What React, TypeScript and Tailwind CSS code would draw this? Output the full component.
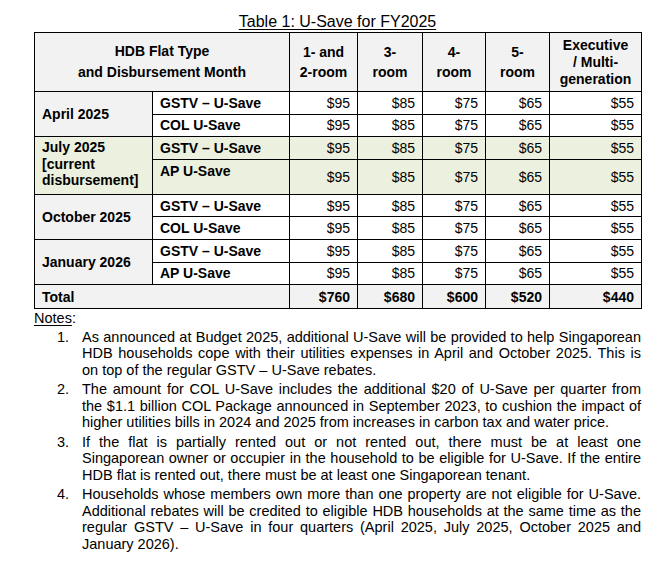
import React from 'react'

const font = { fontFamily: '"Liberation Sans", Arial, sans-serif' }

type Row = {
  type: string
  values: string[]
}

type Group = {
  month: React.ReactNode
  green?: boolean
  rows: Row[]
}

const vals = ['$95', '$85', '$75', '$65', '$55']

const groups: Group[] = [
  {
    month: 'April 2025',
    rows: [
      { type: 'GSTV – U-Save', values: vals },
      { type: 'COL U-Save', values: vals },
    ],
  },
  {
    month: (
      <>
        July 2025
        <br />
        [current
        <br />
        disbursement]
      </>
    ),
    green: true,
    rows: [
      { type: 'GSTV – U-Save', values: vals },
      { type: 'AP U-Save', values: vals },
    ],
  },
  {
    month: 'October 2025',
    rows: [
      { type: 'GSTV – U-Save', values: vals },
      { type: 'COL U-Save', values: vals },
    ],
  },
  {
    month: 'January 2026',
    rows: [
      { type: 'GSTV – U-Save', values: vals },
      { type: 'AP U-Save', values: vals },
    ],
  },
]

const notes: string[][] = [
  [
    'As announced at Budget 2025, additional U-Save will be provided to help Singaporean',
    'HDB households cope with their utilities expenses in April and October 2025. This is',
    'on top of the regular GSTV – U-Save rebates.',
  ],
  [
    'The amount for COL U-Save includes the additional $20 of U-Save per quarter from',
    'the $1.1 billion COL Package announced in September 2023, to cushion the impact of',
    'higher utilities bills in 2024 and 2025 from increases in carbon tax and water price.',
  ],
  [
    'If the flat is partially rented out or not rented out, there must be at least one',
    'Singaporean owner or occupier in the household to be eligible for U-Save. If the entire',
    'HDB flat is rented out, there must be at least one Singaporean tenant.',
  ],
  [
    'Households whose members own more than one property are not eligible for U-Save.',
    'Additional rebates will be credited to eligible HDB households at the same time as the',
    'regular GSTV – U-Save in four quarters (April 2025, July 2025, October 2025 and',
    'January 2026).',
  ],
]

const cell = 'border border-black px-[7px]'

export default function App() {
  return (
    <div className="min-h-screen bg-white pl-[34px] pt-[11px] text-black" style={font}>
      <div className="w-[607px]">
        <div className="text-center text-[16px] leading-[21px]">
          <span className="underline underline-offset-2">Table 1: U-Save for FY2025</span>
        </div>

        <table className="w-[607px] table-fixed border-collapse text-[14px]">
          <colgroup>
            <col className="w-[118px]" />
            <col className="w-[137px]" />
            <col className="w-[68px]" />
            <col className="w-[65px]" />
            <col className="w-[63px]" />
            <col className="w-[64px]" />
            <col className="w-[92px]" />
          </colgroup>
          <thead>
            <tr className="h-[59px] bg-[#f2f2f2] font-bold">
              <th colSpan={2} className={`${cell} text-center leading-[21px]`}>
                HDB Flat Type
                <br />
                and Disbursement Month
              </th>
              <th className={`${cell} text-center leading-[20px]`}>
                1- and
                <br />
                2-room
              </th>
              <th className={`${cell} text-center leading-[20px]`}>
                3-
                <br />
                room
              </th>
              <th className={`${cell} text-center leading-[20px]`}>
                4-
                <br />
                room
              </th>
              <th className={`${cell} text-center leading-[20px]`}>
                5-
                <br />
                room
              </th>
              <th className={`${cell} text-center leading-[17px]`}>
                Executive
                <br />/ Multi-
                <br />
                generation
              </th>
            </tr>
          </thead>
          <tbody>
            {groups.map((g, gi) =>
              g.rows.map((r, ri) => {
                const tall = g.green && ri === 1
                const bg = g.green ? 'bg-[#ebf1de]' : 'bg-white'
                return (
                  <tr key={`${gi}-${ri}`} className={tall ? 'h-[35px]' : 'h-[22.6px]'}>
                    {ri === 0 && (
                      <td
                        rowSpan={2}
                        className={`${cell} font-bold ${
                          g.green
                            ? 'bg-[#ebf1de] pt-[2px] align-top leading-[16.5px]'
                            : 'bg-[#f2f2f2] align-middle leading-[16px]'
                        }`}
                      >
                        {g.month}
                      </td>
                    )}
                    <td
                      className={`${cell} ${bg} font-bold leading-[16px] ${
                        tall ? 'pt-[3px] align-top' : 'align-middle'
                      }`}
                    >
                      {r.type}
                    </td>
                    {r.values.map((v, vi) => (
                      <td key={vi} className={`${cell} ${bg} text-right align-middle leading-[16px]`}>
                        {v}
                      </td>
                    ))}
                  </tr>
                )
              })
            )}
            <tr className="h-[24px] bg-[#f2f2f2] font-bold">
              <td colSpan={2} className={`${cell} leading-[16px]`}>
                Total
              </td>
              {['$760', '$680', '$600', '$520', '$440'].map((t) => (
                <td key={t} className={`${cell} text-right leading-[16px]`}>
                  {t}
                </td>
              ))}
            </tr>
          </tbody>
        </table>

        <div className="mt-[1px] text-[14.5px] leading-[16.5px]">
          <div>
            <span className="underline underline-offset-2">Notes</span>:
          </div>
          <ol className="mt-[2px] flex flex-col gap-[3px]">
            {notes.map((lines, ni) => (
              <li key={ni} className="flex">
                <span className="w-[48px] shrink-0 pl-[23px]">{ni + 1}.</span>
                <div className="flex-1">
                  {lines.map((l, li) => (
                    <div
                      key={li}
                      className={
                        li < lines.length - 1
                          ? 'whitespace-nowrap text-justify [text-align-last:justify]'
                          : 'whitespace-nowrap'
                      }
                    >
                      {l}
                    </div>
                  ))}
                </div>
              </li>
            ))}
          </ol>
        </div>
      </div>
    </div>
  )
}
